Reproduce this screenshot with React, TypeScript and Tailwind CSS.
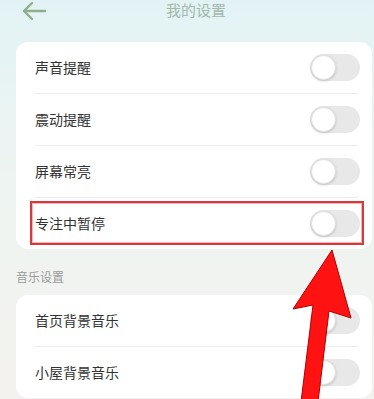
import type { ReactNode } from 'react'

const font = { fontFamily: '"Noto Sans CJK SC", "Noto Sans", sans-serif' }

function Toggle() {
  return (
    <div className="relative h-[27px] w-[50px] rounded-full bg-[#e8e8e8]">
      <div className="absolute left-[1px] top-[1px] h-[25px] w-[25px] rounded-full border border-[#e0e0e0] bg-white shadow-[0_1px_3px_rgba(0,0,0,0.18)]" />
    </div>
  )
}

function Row({ label, last, highlight }: { label: string; last?: boolean; highlight?: boolean }) {
  return (
    <div className="relative">
      <div className="flex h-[51px] items-center justify-between pl-[19px] pr-[12px]">
        <span className="text-[14px] text-[#333333]">{label}</span>
        <Toggle />
      </div>
      {!last && <div className="ml-[19px] mr-[14px] h-px bg-[#ececec]" />}
      {highlight && (
        <div className="absolute left-[14px] right-[8px] top-[3px] h-[44px] border-2 border-[#d8383c] shadow-[inset_0_0_0_1px_rgba(240,150,150,0.7)]" />
      )}
    </div>
  )
}

function Card({ children, className = '' }: { children: ReactNode; className?: string }) {
  return <div className={`ml-[16px] mr-[2px] rounded-[12px] bg-white ${className}`}>{children}</div>
}

export default function App() {
  return (
    <div
      className="relative h-[399px] w-[374px] overflow-hidden bg-gradient-to-b from-[#e3f3f5] via-[#eef4f1] to-[#f4f2ee]"
      style={font}
    >
      <div className="relative flex h-[42px] items-start justify-center">
        <svg
          className="absolute left-[21px] top-[1px]"
          width="26"
          height="20"
          viewBox="0 0 26 20"
          fill="none"
          stroke="#8fae8f"
          strokeWidth="2.4"
          strokeLinecap="round"
          strokeLinejoin="round"
        >
          <path d="M24 10H3M11 2L3 10l8 8" />
        </svg>
        <span className="ml-[18px] text-[15px] leading-[20px] text-[#a3b9ab]">我的设置</span>
      </div>

      <Card>
        <Row label="声音提醒" />
        <Row label="震动提醒" />
        <Row label="屏幕常亮" />
        <Row label="专注中暂停" last highlight />
      </Card>

      <div className="mt-[18px] pl-[16px] text-[12px] leading-[20px] text-[#9a9a9a]">音乐设置</div>

      <Card className="mt-[8px]">
        <Row label="首页背景音乐" />
        <Row label="小屋背景音乐" last />
      </Card>

      <svg
        className="pointer-events-none absolute left-0 top-0"
        width="374"
        height="399"
        viewBox="0 0 374 399"
      >
        <polygon
          points="332,250 351,318 329,311 318,402 301,402 313,305 293,309"
          fill="#ff1212"
          stroke="#b00000"
          strokeWidth="1"
          strokeLinejoin="round"
        />
      </svg>
    </div>
  )
}
